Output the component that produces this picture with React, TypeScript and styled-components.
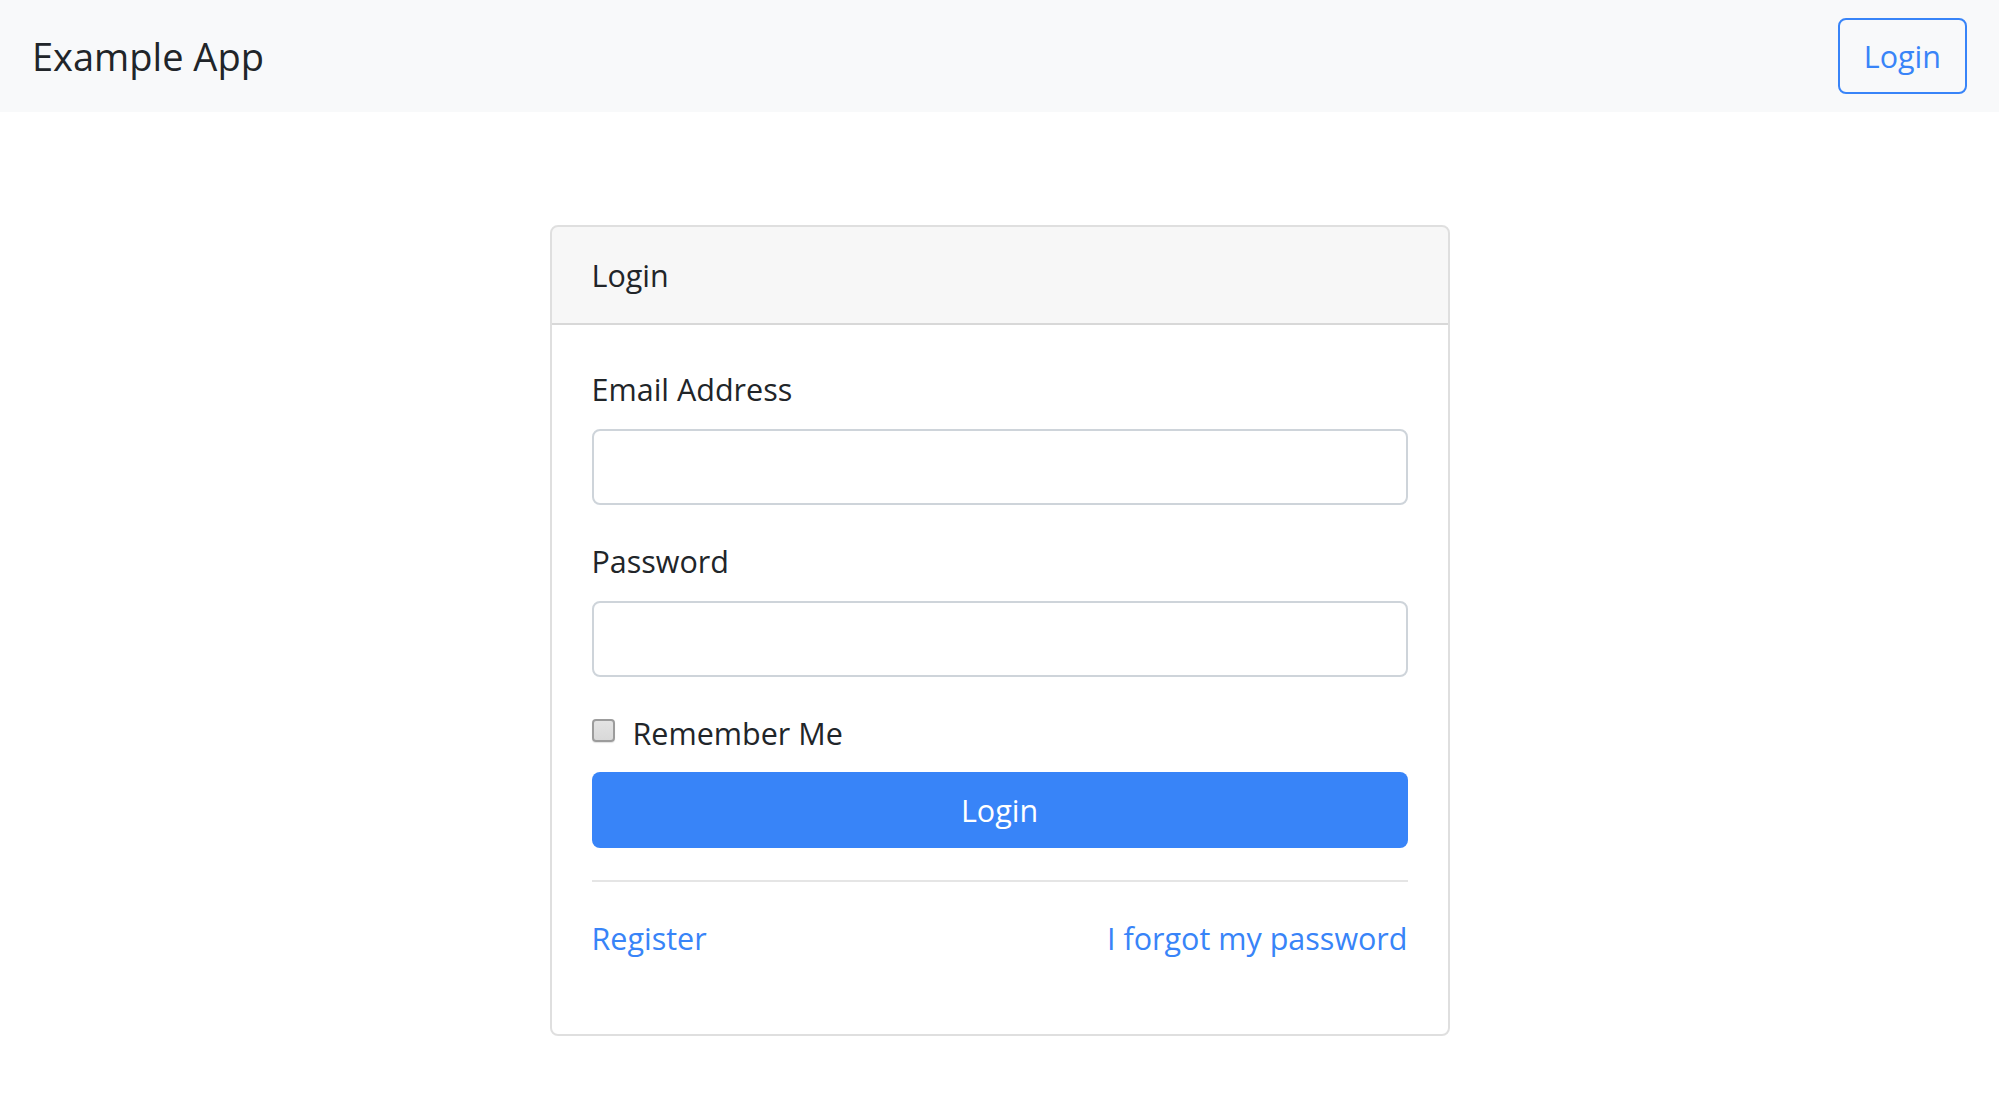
import React from "react";
import styled, { createGlobalStyle } from "styled-components";

const PRIMARY = "#3884f8";
const BASE_FONT = "30.5px";

const GlobalStyle = createGlobalStyle`
  html, body {
    margin: 0;
    padding: 0;
    background: #ffffff;
  }
  body {
    font-family: "Open Sans", "Noto Sans", "Liberation Sans", sans-serif;
    font-size: ${BASE_FONT};
    line-height: 48px;
    color: #212529;
  }
  * { box-sizing: border-box; }
`;

const Navbar = styled.nav`
  display: flex;
  align-items: center;
  justify-content: space-between;
  padding: 16px 32px;
  background: #f8f9fa;
`;

const Brand = styled.a`
  font-size: 38px;
  line-height: 60px;
  padding: 10px 0;
  color: #212529;
  text-decoration: none;
`;

const OutlineButton = styled.button`
  font-family: inherit;
  font-size: ${BASE_FONT};
  line-height: 48px;
  padding: 12px 24px;
  border: 2px solid ${PRIMARY};
  border-radius: 8px;
  background: transparent;
  color: ${PRIMARY};
  cursor: pointer;
`;

const Main = styled.main`
  display: flex;
  justify-content: center;
  padding-top: 113px;
`;

const Card = styled.section`
  width: 900px;
  border: 2px solid rgba(0, 0, 0, 0.125);
  border-radius: 8px;
  overflow: hidden;
`;

const CardHeader = styled.header`
  padding: 24px 40px;
  background: rgba(0, 0, 0, 0.03);
  border-bottom: 2px solid rgba(0, 0, 0, 0.125);
`;

const CardBody = styled.div`
  padding: 40px;
`;

const FormGroup = styled.div`
  margin-bottom: 32px;
`;

const Label = styled.label`
  display: block;
  margin-bottom: 16px;
`;

const TextInput = styled.input`
  display: block;
  width: 100%;
  height: 76px;
  padding: 12px 24px;
  font-family: inherit;
  font-size: ${BASE_FONT};
  border: 2px solid #ced4da;
  border-radius: 8px;
  background: #fff;
  color: #495057;
  outline: none;
`;

const CheckRow = styled.label`
  display: flex;
  align-items: center;
  height: 48px;
  margin-bottom: 15px;
  gap: 18px;
`;

const CheckBox = styled.input.attrs({ type: "checkbox" })`
  appearance: none;
  -webkit-appearance: none;
  margin: 0 0 6px 0;
  width: 23px;
  height: 23px;
  border: 2px solid #9c9c9c;
  border-radius: 4px;
  background: linear-gradient(#e3e3e3, #d9d9d9);
  box-shadow: 0 1px 1px rgba(0, 0, 0, 0.12);
`;

const PrimaryButton = styled.button`
  display: block;
  width: 100%;
  height: 76px;
  font-family: inherit;
  font-size: ${BASE_FONT};
  line-height: 48px;
  border: none;
  border-radius: 8px;
  background: ${PRIMARY};
  color: #ffffff;
  cursor: pointer;
`;

const Divider = styled.hr`
  margin: 32px 0;
  border: 0;
  border-top: 2px solid rgba(0, 0, 0, 0.1);
`;

const LinksRow = styled.div`
  display: flex;
  justify-content: space-between;
  margin-bottom: 32px;
`;

const Link = styled.a`
  color: ${PRIMARY};
  text-decoration: none;
`;

export default function App() {
  return (
    <>
      <GlobalStyle />
      <Navbar>
        <Brand href="#">Example App</Brand>
        <OutlineButton>Login</OutlineButton>
      </Navbar>
      <Main>
        <Card>
          <CardHeader>Login</CardHeader>
          <CardBody>
            <FormGroup>
              <Label htmlFor="email">Email Address</Label>
              <TextInput id="email" type="email" />
            </FormGroup>
            <FormGroup>
              <Label htmlFor="password">Password</Label>
              <TextInput id="password" type="password" />
            </FormGroup>
            <CheckRow>
              <CheckBox />
              <span>Remember Me</span>
            </CheckRow>
            <PrimaryButton>Login</PrimaryButton>
            <Divider />
            <LinksRow>
              <Link href="#">Register</Link>
              <Link href="#">I forgot my password</Link>
            </LinksRow>
          </CardBody>
        </Card>
      </Main>
    </>
  );
}
